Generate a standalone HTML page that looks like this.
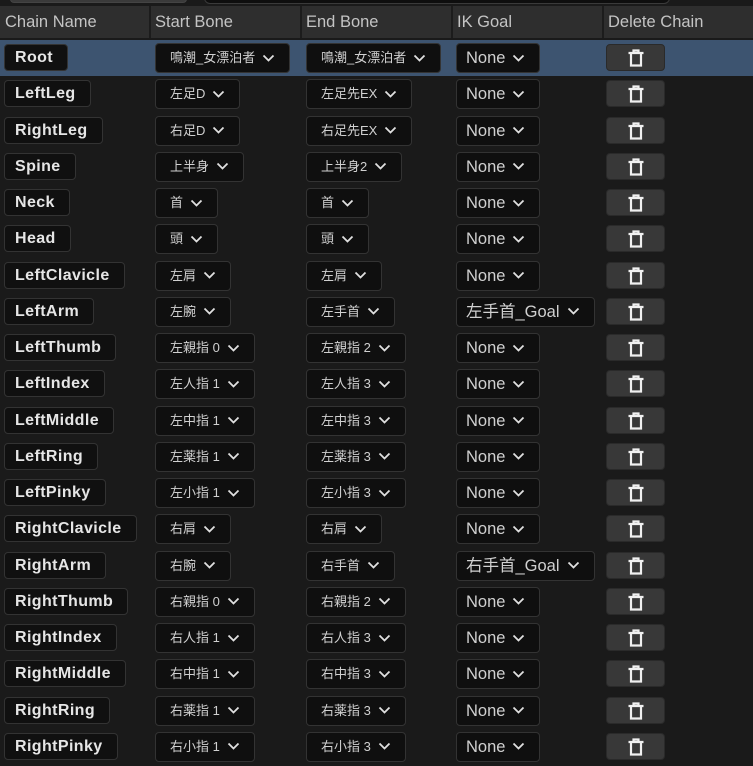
<!DOCTYPE html>
<html><head><meta charset="utf-8"><style>
*{box-sizing:border-box;margin:0;padding:0}
body{width:753px;height:766px;background:#1a1a1a;overflow:hidden;position:relative;font-family:"Liberation Sans","Noto Sans CJK JP",sans-serif}
.top1{position:absolute;left:10px;top:-6px;width:177px;height:9px;background:#3a3a3a;border-radius:4px;border:1px solid #444}
.top2{position:absolute;left:204px;top:-8px;width:466px;height:12px;background:#0e0e0e;border-radius:8px;border:1px solid #3a3a3a}
.hdr{position:absolute;left:0;top:6px;width:753px;height:32px;background:#2e2e2e}
.hdr div{position:absolute;top:0;height:32px;line-height:32px;color:#c4c4c4;font-size:16.5px;padding-left:5px}
.sep{position:absolute;top:6px;width:2px;height:32px;background:#1c1c1c}
.row{position:absolute;left:0;width:753px;height:36px}
.row.sel{background:#3d5470}
.nm{position:absolute;left:4px;height:27px;top:4px;background:#101010;border:1px solid #333;border-radius:4px;color:#e6e6e6;font-weight:bold;font-size:16px;letter-spacing:0.4px;line-height:25px;padding:0 14px 0 10px}
.dd{position:absolute;top:3px;height:30px;background:#0f0f0f;border:1px solid #333;border-radius:4px;color:#d0d0d0;font-size:13px;line-height:28px;padding:0 14px 0 14px;white-space:nowrap}
.dd.big{font-size:16.5px;padding:0 14px 0 9px;line-height:29px}
.dd svg{vertical-align:middle;margin-left:7px;position:relative;top:-1px}
.tr{position:absolute;left:606px;top:4px;width:59px;height:27px;background:#383838;border:1px solid #2a2a2a;border-radius:4px}
.tr svg{position:absolute;left:19px;top:3px}
</style></head><body>
<div class="top1"></div><div class="top2"></div>
<div class="hdr">
<div style="left:0">Chain Name</div><div style="left:150px">Start Bone</div><div style="left:301px">End Bone</div><div style="left:452px">IK Goal</div><div style="left:603px">Delete Chain</div>
</div>
<div class="sep" style="left:149px"></div><div class="sep" style="left:300px"></div><div class="sep" style="left:451px"></div><div class="sep" style="left:602px"></div>
<div id="rows"></div>
<script>
var A='<svg width="13" height="8" viewBox="0 0 13 8"><path d="M1.5 1.5 6.5 6.5 11.5 1.5" fill="none" stroke="#e0e0e0" stroke-width="1.8"/></svg>';
var T='<svg width="20" height="20" viewBox="0 0 20 20" fill="none" stroke="#f0f0f0" stroke-width="2.2"><path d="M2.5 5h15M7.5 5V2.5h5V5M5 6v11.5h10V6"/></svg>';
var d=[["Root","鳴潮_女漂泊者","鳴潮_女漂泊者","None"],["LeftLeg","左足D","左足先EX","None"],["RightLeg","右足D","右足先EX","None"],["Spine","上半身","上半身2","None"],["Neck","首","首","None"],["Head","頭","頭","None"],["LeftClavicle","左肩","左肩","None"],["LeftArm","左腕","左手首","左手首_Goal"],["LeftThumb","左親指 0","左親指 2","None"],["LeftIndex","左人指 1","左人指 3","None"],["LeftMiddle","左中指 1","左中指 3","None"],["LeftRing","左薬指 1","左薬指 3","None"],["LeftPinky","左小指 1","左小指 3","None"],["RightClavicle","右肩","右肩","None"],["RightArm","右腕","右手首","右手首_Goal"],["RightThumb","右親指 0","右親指 2","None"],["RightIndex","右人指 1","右人指 3","None"],["RightMiddle","右中指 1","右中指 3","None"],["RightRing","右薬指 1","右薬指 3","None"],["RightPinky","右小指 1","右小指 3","None"]];
var h='';
d.forEach(function(r,i){
var t=40+i*36.25;
h+='<div class="row'+(i==0?' sel':'')+'" style="top:'+t+'px">'+
'<div class="nm">'+r[0]+'</div>'+
'<div class="dd" style="left:155px">'+r[1]+A+'</div>'+
'<div class="dd" style="left:306px">'+r[2]+A+'</div>'+
'<div class="dd big" style="left:456px">'+r[3]+A+'</div>'+
'<div class="tr">'+T+'</div></div>';
});
document.getElementById('rows').innerHTML=h;
</script>
</body></html>
